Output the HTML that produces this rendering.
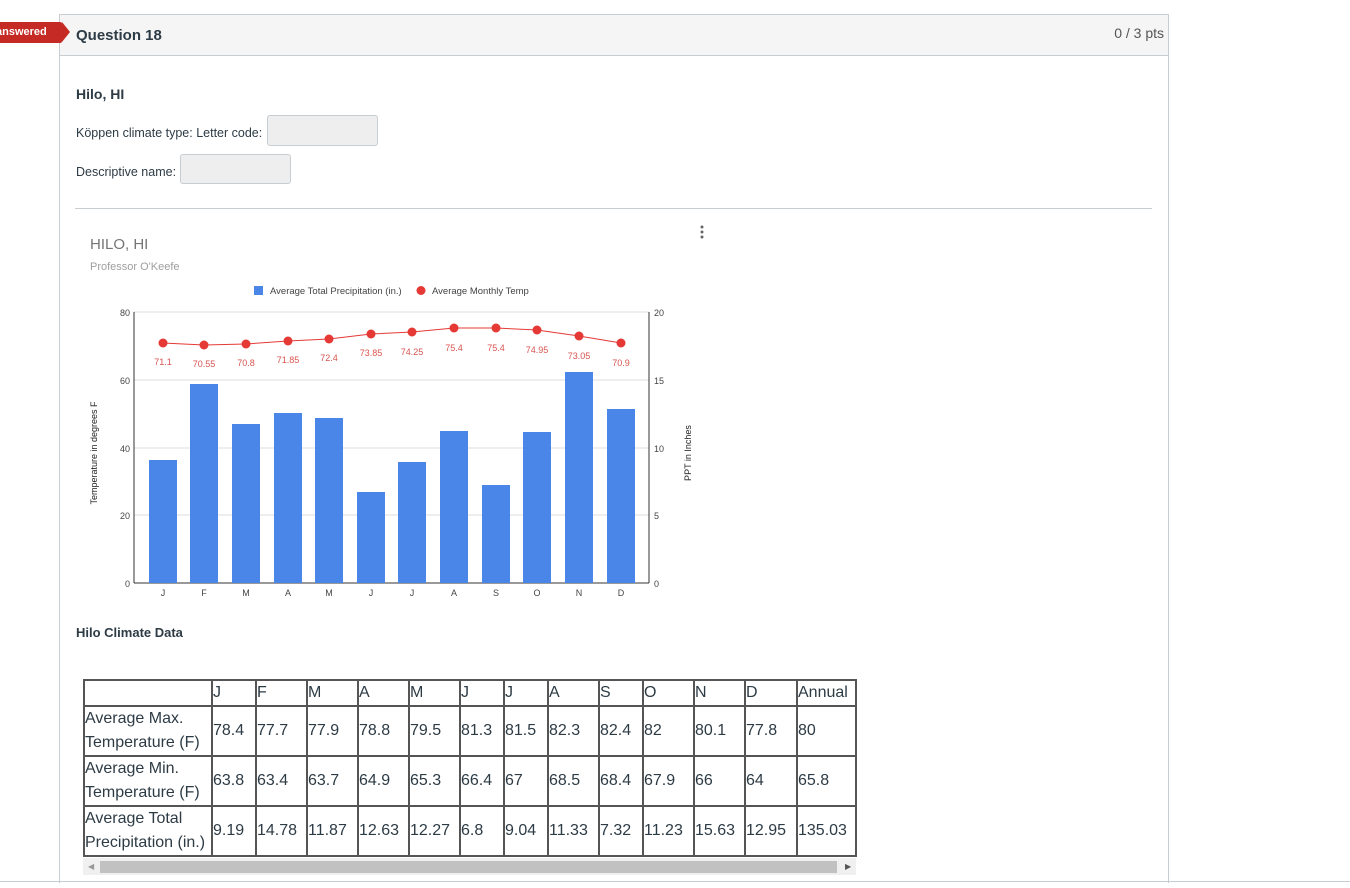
<!DOCTYPE html>
<html><head><meta charset="utf-8"><style>
body{margin:0;width:1350px;height:888px;background:#fff;font-family:"Liberation Sans",sans-serif;position:relative;overflow:hidden;color:#2d3b45}
.card{position:absolute;left:59px;top:14px;width:1108px;height:868px;border:1px solid #c7cdd1;border-bottom:none}
.hdr{height:40px;background:#f5f5f5;border-bottom:1px solid #c7cdd1;position:relative}
.hdr .t{position:absolute;left:16px;top:12px;font-weight:bold;font-size:15px;color:#2d3b45}
.hdr .p{position:absolute;right:4px;top:10px;font-size:14px;color:#555}
.flag{position:absolute;left:-12px;top:22px;height:21px;width:66px;padding-left:8px;background:#c52a25;color:#fff;font-size:11px;font-weight:bold;line-height:20px;border-radius:0 2px 2px 0}
.flag:after{content:"";position:absolute;right:-8px;top:0;border-left:8px solid #c52a25;border-top:10.5px solid transparent;border-bottom:10.5px solid transparent}
.abs{position:absolute;font-size:13px;color:#2d3b45}
.inp{position:absolute;background:#eee;border:1px solid #c7cdd1;border-radius:3px}
table{position:absolute;left:83px;top:679px;border-collapse:collapse;font-size:16px;color:#2d3b45;table-layout:fixed;width:773px}
td{border:2px solid #555;padding:0;vertical-align:middle;line-height:24px;overflow:hidden;white-space:normal}
</style></head><body>
<div class="card"><div class="hdr"><div class="t">Question 18</div><div class="p">0 / 3 pts</div></div></div>
<div class="flag">answered</div>
<div class="abs" style="left:76px;top:86px;font-weight:bold;font-size:14px">Hilo, HI</div>
<div class="abs" style="left:76px;top:126px;font-size:12.5px">Köppen climate type: Letter code:</div>
<div class="inp" style="left:267px;top:115px;width:109px;height:29px"></div>
<div class="abs" style="left:76px;top:165px;font-size:12.5px">Descriptive name:</div>
<div class="inp" style="left:180px;top:154px;width:109px;height:28px"></div>
<div style="position:absolute;left:75px;top:208px;width:1077px;height:1px;background:#c7cdd1"></div>
<svg style="position:absolute;left:0;top:0" width="1350" height="888" font-family="Liberation Sans,sans-serif">
<text x="90" y="249" font-size="15" fill="#757575">HILO, HI</text>
<text x="90" y="270" font-size="11" fill="#9e9e9e">Professor O'Keefe</text>
<circle cx="702" cy="227" r="1.5" fill="#666"/><circle cx="702" cy="232" r="1.5" fill="#666"/><circle cx="702" cy="237" r="1.5" fill="#666"/>
<rect x="254" y="286" width="9" height="9" fill="#4a86e8"/><text x="270" y="294" font-size="9.5" fill="#444">Average Total Precipitation (in.)</text>
<circle cx="421" cy="290.5" r="4.5" fill="#e53935"/><text x="432" y="294" font-size="9.5" fill="#444">Average Monthly Temp</text>
<g stroke="#ddd"><line x1="134" y1="312" x2="649" y2="312"/><line x1="134" y1="380" x2="649" y2="380"/><line x1="134" y1="448" x2="649" y2="448"/><line x1="134" y1="515" x2="649" y2="515"/></g>
<line x1="134" y1="312" x2="134" y2="583" stroke="#333"/><line x1="649" y1="312" x2="649" y2="583" stroke="#333"/><line x1="134" y1="583" x2="649" y2="583" stroke="#333"/>
<g font-size="9" fill="#444" text-anchor="end"><text x="130" y="316">80</text><text x="130" y="384">60</text><text x="130" y="452">40</text><text x="130" y="519">20</text><text x="130" y="587">0</text></g>
<g font-size="9" fill="#444"><text x="654" y="316">20</text><text x="654" y="384">15</text><text x="654" y="452">10</text><text x="654" y="519">5</text><text x="654" y="587">0</text></g>
<text transform="translate(97,453) rotate(-90)" font-size="9" fill="#222" text-anchor="middle">Temperature in degrees F</text>
<text transform="translate(691,453) rotate(-90)" font-size="9" fill="#222" text-anchor="middle">PPT in Inches</text>
<g fill="#4a86e8">
<rect x="149" y="460" width="28" height="123"/><rect x="190" y="384" width="28" height="199"/><rect x="232" y="424" width="28" height="159"/><rect x="274" y="413" width="28" height="170"/><rect x="315" y="418" width="28" height="165"/><rect x="357" y="492" width="28" height="91"/><rect x="398" y="462" width="28" height="121"/><rect x="440" y="431" width="28" height="152"/><rect x="482" y="485" width="28" height="98"/><rect x="523" y="432" width="28" height="151"/><rect x="565" y="372" width="28" height="211"/><rect x="607" y="409" width="28" height="174"/></g>
<polyline fill="none" stroke="#e53935" points="163,343 204,345 246,344 288,341 329,339 371,334 412,332 454,328 496,328 537,330 579,336 621,343"/>
<g fill="#e53935"><circle cx="163" cy="343" r="4.5"/><circle cx="204" cy="345" r="4.5"/><circle cx="246" cy="344" r="4.5"/><circle cx="288" cy="341" r="4.5"/><circle cx="329" cy="339" r="4.5"/><circle cx="371" cy="334" r="4.5"/><circle cx="412" cy="332" r="4.5"/><circle cx="454" cy="328" r="4.5"/><circle cx="496" cy="328" r="4.5"/><circle cx="537" cy="330" r="4.5"/><circle cx="579" cy="336" r="4.5"/><circle cx="621" cy="343" r="4.5"/></g>
<g font-size="9" fill="#d9534f" text-anchor="middle"><text x="163" y="365">71.1</text><text x="204" y="367">70.55</text><text x="246" y="366">70.8</text><text x="288" y="363">71.85</text><text x="329" y="361">72.4</text><text x="371" y="356">73.85</text><text x="412" y="355">74.25</text><text x="454" y="351">75.4</text><text x="496" y="351">75.4</text><text x="537" y="353">74.95</text><text x="579" y="359">73.05</text><text x="621" y="366">70.9</text></g>
<g font-size="9" fill="#444" text-anchor="middle"><text x="163" y="596">J</text><text x="204" y="596">F</text><text x="246" y="596">M</text><text x="288" y="596">A</text><text x="329" y="596">M</text><text x="371" y="596">J</text><text x="412" y="596">J</text><text x="454" y="596">A</text><text x="496" y="596">S</text><text x="537" y="596">O</text><text x="579" y="596">N</text><text x="621" y="596">D</text></g>
</svg>
<div class="abs" style="left:76px;top:625px;font-weight:bold">Hilo Climate Data</div>
<table>
<colgroup><col style="width:128px"><col style="width:44px"><col style="width:51px"><col style="width:51px"><col style="width:51px"><col style="width:51px"><col style="width:44px"><col style="width:44px"><col style="width:51px"><col style="width:44px"><col style="width:51px"><col style="width:51px"><col style="width:52px"><col style="width:59px"></colgroup>
<tr style="height:26px"><td></td><td>J</td><td>F</td><td>M</td><td>A</td><td>M</td><td>J</td><td>J</td><td>A</td><td>S</td><td>O</td><td>N</td><td>D</td><td>Annual</td></tr>
<tr style="height:50px"><td>Average Max. Temperature (F)</td><td>78.4</td><td>77.7</td><td>77.9</td><td>78.8</td><td>79.5</td><td>81.3</td><td>81.5</td><td>82.3</td><td>82.4</td><td>82</td><td>80.1</td><td>77.8</td><td>80</td></tr>
<tr style="height:50px"><td>Average Min. Temperature (F)</td><td>63.8</td><td>63.4</td><td>63.7</td><td>64.9</td><td>65.3</td><td>66.4</td><td>67</td><td>68.5</td><td>68.4</td><td>67.9</td><td>66</td><td>64</td><td>65.8</td></tr>
<tr style="height:50px"><td>Average Total Precipitation (in.)</td><td>9.19</td><td>14.78</td><td>11.87</td><td>12.63</td><td>12.27</td><td>6.8</td><td>9.04</td><td>11.33</td><td>7.32</td><td>11.23</td><td>15.63</td><td>12.95</td><td>135.03</td></tr>
</table>
<div style="position:absolute;left:83px;top:858px;width:773px;height:17px;background:#f0f0f0"></div>
<div style="position:absolute;left:100px;top:861px;width:737px;height:12px;background:#c1c1c1"></div>
<div style="position:absolute;left:88px;top:862px;font-size:8px;color:#999">◀</div>
<div style="position:absolute;left:845px;top:862px;font-size:8px;color:#555">▶</div>
<div style="position:absolute;left:0;top:881px;width:1350px;height:1px;background:#c7cdd1"></div>
</body></html>
